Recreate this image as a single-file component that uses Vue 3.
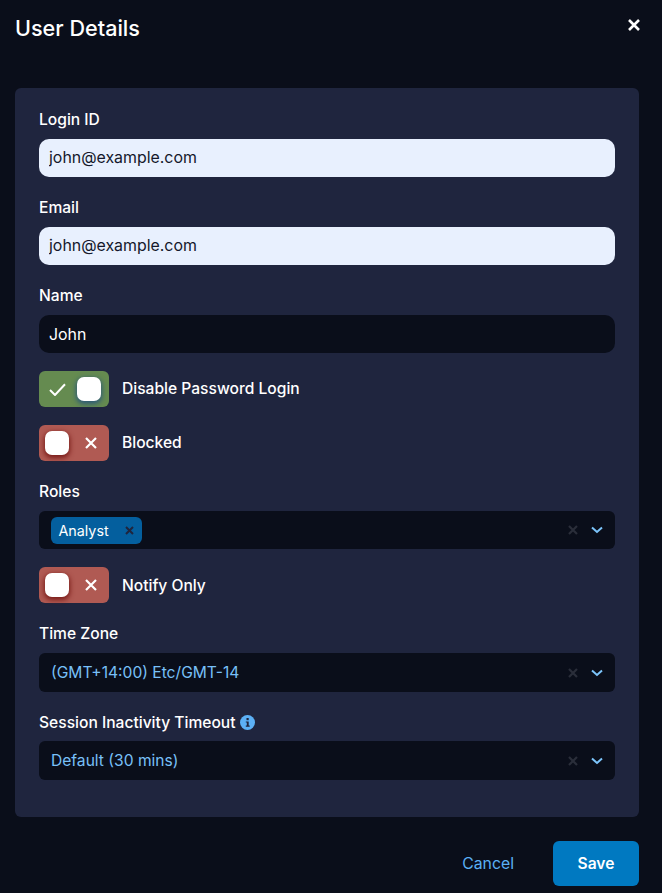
<template>
  <div class="dialog">
    <header class="dialog__head">
      <h2 class="dialog__title">User Details</h2>
      <button class="dialog__close" aria-label="Close">
        <svg width="12" height="12" viewBox="0 0 12 12"><path d="M1 1l10 10M11 1L1 11" stroke="#fff" stroke-width="2.6" /></svg>
      </button>
    </header>

    <form class="panel" @submit.prevent>
      <div class="field">
        <label class="field__label">Login ID</label>
        <input class="input input--filled" value="john@example.com" />
      </div>
      <div class="field">
        <label class="field__label">Email</label>
        <input class="input input--filled" value="john@example.com" />
      </div>
      <div class="field">
        <label class="field__label">Name</label>
        <input class="input" value="John" />
      </div>

      <div class="toggle-row">
        <div class="toggle toggle--on">
          <svg class="toggle__icon" width="17" height="13" viewBox="0 0 17 13"><path d="M1 7l5 5L16 1.2" fill="none" stroke="#fff" stroke-width="2" /></svg>
          <span class="toggle__knob"></span>
        </div>
        <span class="toggle-row__label toggle-row__label--up">Disable Password Login</span>
      </div>
      <div class="toggle-row">
        <div class="toggle toggle--off">
          <span class="toggle__knob"></span>
          <svg class="toggle__icon" width="12" height="12" viewBox="0 0 12 12"><path d="M1 1l10 10M11 1L1 11" fill="none" stroke="#fff" stroke-width="2.2" /></svg>
        </div>
        <span class="toggle-row__label toggle-row__label--up">Blocked</span>
      </div>

      <div class="field">
        <label class="field__label">Roles</label>
        <div class="select select--multi">
          <span class="chip">
            Analyst
            <svg width="9" height="9" viewBox="0 0 9 9"><path d="M1 1l7 7M8 1L1 8" stroke="#20253d" stroke-width="2" /></svg>
          </span>
          <div class="select__actions">
            <svg class="select__clear" width="10" height="10" viewBox="0 0 10 10"><path d="M1 1l8 8M9 1L1 9" stroke="#2a2e3a" stroke-width="2.2" /></svg>
            <svg width="12" height="8" viewBox="0 0 12 8"><path d="M1 1.5l5 4.5 5-4.5" fill="none" stroke="#7cc4fa" stroke-width="2" /></svg>
          </div>
        </div>
      </div>

      <div class="toggle-row">
        <div class="toggle toggle--off">
          <span class="toggle__knob"></span>
          <svg class="toggle__icon" width="12" height="12" viewBox="0 0 12 12"><path d="M1 1l10 10M11 1L1 11" fill="none" stroke="#fff" stroke-width="2.2" /></svg>
        </div>
        <span class="toggle-row__label">Notify Only</span>
      </div>

      <div class="field">
        <label class="field__label">Time Zone</label>
        <div class="select">
          <span class="select__value">(GMT+14:00) Etc/GMT-14</span>
          <div class="select__actions">
            <svg class="select__clear" width="10" height="10" viewBox="0 0 10 10"><path d="M1 1l8 8M9 1L1 9" stroke="#2a2e3a" stroke-width="2.2" /></svg>
            <svg width="12" height="8" viewBox="0 0 12 8"><path d="M1 1.5l5 4.5 5-4.5" fill="none" stroke="#7cc4fa" stroke-width="2" /></svg>
          </div>
        </div>
      </div>

      <div class="field">
        <label class="field__label field__label--tight">
          Session Inactivity Timeout
          <svg class="info" width="15" height="15" viewBox="0 0 15 15">
            <circle cx="7.5" cy="7.5" r="7.5" fill="#5cb0f5" />
            <rect x="6.5" y="3" width="2.2" height="2.2" fill="#20253d" />
            <path d="M5.8 6.4h2.9v4.2h1v1.2H5.8v-1.2h1V7.6h-1z" fill="#20253d" />
          </svg>
        </label>
        <div class="select">
          <span class="select__value">Default (30 mins)</span>
          <div class="select__actions">
            <svg class="select__clear" width="10" height="10" viewBox="0 0 10 10"><path d="M1 1l8 8M9 1L1 9" stroke="#2a2e3a" stroke-width="2.2" /></svg>
            <svg width="12" height="8" viewBox="0 0 12 8"><path d="M1 1.5l5 4.5 5-4.5" fill="none" stroke="#7cc4fa" stroke-width="2" /></svg>
          </div>
        </div>
      </div>
    </form>

    <footer class="dialog__foot">
      <button class="btn btn--ghost">Cancel</button>
      <button class="btn btn--primary">Save</button>
    </footer>
  </div>
</template>

<script setup>
</script>

<style>
html, body {
  background: #0a0e1a;
}
</style>

<style scoped>
.dialog {
  box-sizing: border-box;
  width: 662px;
  height: 893px;
  padding: 0 23px 0 15px;
  background: #0a0e1a;
  color: #fff;
  font-family: Inter, "Liberation Sans", sans-serif;
  font-size: 15.6px;
  overflow: hidden;
}

.dialog__head {
  display: flex;
  align-items: center;
  justify-content: space-between;
  height: 88px;
  margin-right: -1px;
  padding-bottom: 32px;
  box-sizing: border-box;
}

.dialog__title {
  margin: 0;
  font-size: 21.6px;
  font-weight: 500;
  line-height: 56px;
}

.dialog__close {
  display: flex;
  margin: 0 0 7px;
  padding: 0;
  border: 0;
  background: none;
}

.panel {
  display: flex;
  flex-direction: column;
  gap: 18px;
  height: 729px;
  box-sizing: border-box;
  padding: 19px 24px 0;
  border-radius: 6px;
  background: #1f253e;
}

.field {
  margin-top: 1px;
}

.field__label {
  display: flex;
  align-items: center;
  gap: 4px;
  height: 22px;
  margin-bottom: 9px;
  font-weight: 500;
}

.field__label--tight {
  margin-bottom: 8px;
}

.input {
  display: block;
  box-sizing: border-box;
  width: 100%;
  height: 38px;
  padding: 0 10px;
  border: 0;
  border-radius: 10px;
  background: #0a0e1a;
  color: #fff;
  font: inherit;
  font-size: 15.9px;
  outline: none;
}

.input--filled {
  padding-bottom: 1px;
  background: #e8f0fe;
  color: #14182b;
}

.toggle-row {
  display: flex;
  align-items: center;
  gap: 13px;
}

.toggle-row__label {
  font-weight: 500;
}

.toggle-row__label--up {
  margin-bottom: 2px;
}

.toggle {
  display: flex;
  align-items: center;
  justify-content: space-between;
  box-sizing: border-box;
  width: 70px;
  height: 36px;
  padding: 6px 8px 6px 6px;
  border-radius: 6px;
}

.toggle--on {
  padding: 6px 8px 6px 10px;
  background: #658b50;
}

.toggle--on .toggle__knob {
  box-shadow: 0 2px 5px 1px #2d5a78;
}

.toggle--off {
  padding: 6px 12.5px 6px 6px;
  background: #b05a53;
}

.toggle--off .toggle__knob {
  box-shadow: 0 2px 5px 1px #7a1d1a;
}

.toggle__knob {
  width: 24px;
  height: 24px;
  border-radius: 7px;
  background: #fff;
}

.select {
  display: flex;
  align-items: center;
  box-sizing: border-box;
  height: 39px;
  padding: 0 12px;
  border-radius: 6px;
  background: #0a0e1a;
}

.select--multi {
  height: 38px;
}

.select__value {
  color: #78c0f8;
}

.select__actions {
  display: flex;
  align-items: center;
  gap: 13px;
  margin-left: auto;
}

.chip {
  display: flex;
  align-items: center;
  gap: 16px;
  height: 27px;
  padding: 0 8px 0 7.5px;
  border-radius: 6px;
  background: #045f9e;
  font-size: 14.3px;
}

.dialog__foot {
  display: flex;
  justify-content: flex-end;
  align-items: center;
  gap: 39px;
  margin-top: 24px;
}

.btn {
  height: 45px;
  border: 0;
  border-radius: 6px;
  font: inherit;
  font-size: 15.8px;
}

.btn--ghost {
  padding: 0;
  background: none;
  color: #5bb0f5;
}

.btn--primary {
  width: 86px;
  background: #0079c1;
  color: #fff;
  font-size: 15.6px;
  font-weight: 600;
}
</style>
